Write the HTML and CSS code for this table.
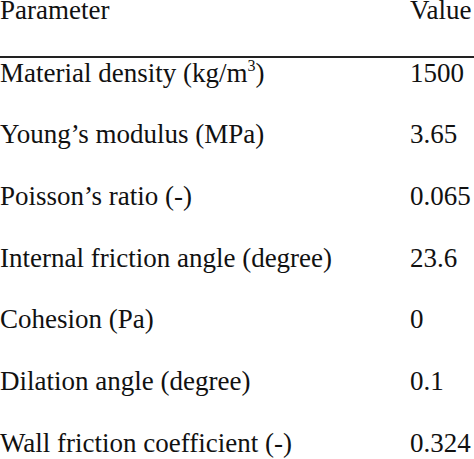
FILE: index.html
```html
<!DOCTYPE html>
<html lang="en">
<head>
    <meta charset="UTF-8">
    <meta name="viewport" content="width=device-width, initial-scale=1.0">
    <title>Parameters</title>
    <link rel="stylesheet" href="styles.css">
</head>
<body>

    <!-- Header row with rule underneath -->
    <div class="table-head">
        <div class="cell">Parameter</div>
        <div class="cell value">Value</div>
    </div>

    <!-- Parameter rows -->
    <div class="table-body">
        <div class="row">
            <div class="cell">Material density (kg/m<sup>3</sup>)</div>
            <div class="cell value">1500</div>
        </div>
        <div class="row">
            <div class="cell">Young’s modulus (MPa)</div>
            <div class="cell value">3.65</div>
        </div>
        <div class="row">
            <div class="cell">Poisson’s ratio (-)</div>
            <div class="cell value">0.065</div>
        </div>
        <div class="row">
            <div class="cell">Internal friction angle (degree)</div>
            <div class="cell value">23.6</div>
        </div>
        <div class="row">
            <div class="cell">Cohesion (Pa)</div>
            <div class="cell value">0</div>
        </div>
        <div class="row">
            <div class="cell">Dilation angle (degree)</div>
            <div class="cell value">0.1</div>
        </div>
        <div class="row">
            <div class="cell">Wall friction coefficient (-)</div>
            <div class="cell value">0.324</div>
        </div>
    </div>

</body>
</html>
```

FILE: styles.css
```css
body {
    background-color: #fff;
    font-family: 'Liberation Serif', 'Times New Roman', serif;
    font-size: 27px;
    color: #111;
    margin: 0;
    padding: 0;
    height: 100vh;
    overflow: hidden;
}

.table-head,
.row {
    display: grid;
    grid-template-columns: 409px 1fr;
    line-height: 17px;
    white-space: nowrap;
}

.table-head {
    padding-top: 2px;
    padding-bottom: 37px;
    border-bottom: 2px solid #222;
}

.table-body {
    display: grid;
    row-gap: 44.7px;
    padding-top: 6.5px;
}

.value {
    padding-left: 1px;
}

sup {
    font-size: 16px;
    line-height: 0;
    vertical-align: 11px;
}
```
